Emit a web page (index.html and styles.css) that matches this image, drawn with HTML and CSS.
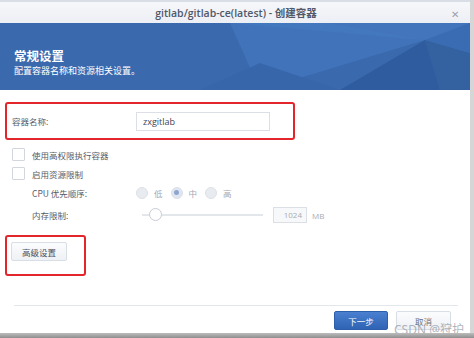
FILE: index.html
```html
<!DOCTYPE html>
<html lang="zh-CN">
<head>
    <meta charset="UTF-8">
    <title>创建容器</title>
    <link rel="stylesheet" href="styles.css">
</head>
<body>
    <div class="page">
        <div class="window">
            <div class="titlebar">
                <span class="title">gitlab/gitlab-ce(latest) - 创建容器</span>
                <span class="close">&#x2715;</span>
            </div>
            <div class="banner">
                <svg class="banner-art" width="470" height="67" viewBox="0 0 470 67">
                    <polygon points="230,0 470,0 470,30 425,17" fill="#4275bb"/>
                    <polygon points="260,67 425,17 330,0 230,0" fill="#4478bf" opacity="0.7"/>
                    <polygon points="340,67 425,17 440,67" fill="#2f5c9f"/>
                    <polygon points="425,17 470,30 470,67 440,67" fill="#34619f"/>
                    <polygon points="425,17 470,0 470,30" fill="#3a6cb3"/>
                    <polygon points="200,67 260,40 340,67" fill="#3866aa"/>
                </svg>
                <div class="banner-title">常规设置</div>
                <div class="banner-sub">配置容器名称和资源相关设置。</div>
            </div>
            <div class="content">
                <div class="mark name-box">
                    <span class="label">容器名称:</span>
                    <div class="text-input">zxgitlab</div>
                </div>
                <div class="check-row first">
                    <span class="checkbox"></span>
                    <span class="check-label">使用高权限执行容器</span>
                </div>
                <div class="check-row">
                    <span class="checkbox"></span>
                    <span class="check-label">启用资源限制</span>
                </div>
                <div class="field-row">
                    <span class="sub-label">CPU 优先顺序:</span>
                    <div class="radios">
                        <span class="radio"></span><span class="radio-text">低</span>
                        <span class="radio checked"></span><span class="radio-text">中</span>
                        <span class="radio"></span><span class="radio-text">高</span>
                    </div>
                </div>
                <div class="field-row mem-row">
                    <span class="sub-label">内存限制:</span>
                    <div class="slider">
                        <span class="slider-track"></span>
                        <span class="slider-thumb"></span>
                    </div>
                    <div class="num-input">1024</div>
                    <span class="unit">MB</span>
                </div>
                <div class="mark adv-box">
                    <button class="btn">高级设置</button>
                </div>
            </div>
            <div class="footer">
                <button class="btn btn-primary">下一步</button>
                <button class="btn btn-cancel">取消</button>
                <span class="watermark">CSDN @狩护</span>
            </div>
        </div>
    </div>
</body>
</html>
```

FILE: styles.css
```css
body, html {
    margin: 0;
    height: 100%;
    font-family: "Noto Sans CJK SC", "Noto Sans", sans-serif;
}

.page {
    width: 474px;
    height: 338px;
    background: linear-gradient(to right, #ffffff 0, #ffffff 470px, #d6d6d6 470px);
    position: relative;
}

.window {
    width: 470px;
    height: 333px;
    background: #ffffff;
    display: flex;
    flex-direction: column;
    position: relative;
}

.page::after {
    content: "";
    position: absolute;
    left: 0;
    right: 0;
    bottom: 0;
    height: 5px;
    background: linear-gradient(#bdbdbd, #8e8e8e);
}

.titlebar {
    height: 23px;
    border-top: 2px solid #d9dde6;
    box-sizing: border-box;
    background: linear-gradient(#f6f7fa, #eceff4);
    display: flex;
    align-items: center;
    justify-content: center;
    position: relative;
}

.title {
    font-family: "Open Sans", "Noto Sans CJK SC", sans-serif;
    font-size: 10.5px;
    font-weight: 600;
    color: #50586a;
    margin-left: 2px;
}

.close {
    position: absolute;
    right: 11px;
    top: 4px;
    font-size: 10px;
    color: #9aa0aa;
}

.banner {
    height: 67px;
    background: #3a69ad;
    position: relative;
    overflow: hidden;
    padding: 25px 0 0 14px;
    box-sizing: border-box;
    color: #ffffff;
}

.banner-art {
    position: absolute;
    left: 0;
    top: 0;
}

.banner-title {
    position: relative;
    font-size: 12.5px;
    font-weight: 700;
    line-height: 16px;
    height: 17px;
}

.banner-sub {
    position: relative;
    font-size: 9px;
    line-height: 12px;
}

.content {
    flex: 1;
    padding: 12px 0 0 5px;
    font-size: 8.5px;
    color: #555c68;
}

.mark {
    border: 2px solid #e2262c;
    border-radius: 3px;
    box-sizing: border-box;
}

.name-box {
    width: 290px;
    height: 38px;
    display: flex;
    align-items: center;
    padding-left: 5px;
}

.label {
    width: 124px;
}

.text-input {
    width: 134px;
    height: 19px;
    border: 1px solid #dcdfe5;
    box-sizing: border-box;
    font-family: "Open Sans", sans-serif;
    font-size: 9px;
    color: #3f4450;
    padding-left: 6px;
    line-height: 17px;
}

.check-row {
    display: flex;
    align-items: center;
    height: 19px;
    padding-left: 7px;
}

.check-row.first {
    margin-top: 5px;
}

.checkbox {
    width: 11px;
    height: 11px;
    border: 1px solid #d2d6dd;
    border-radius: 1px;
    background: #ffffff;
    margin-right: 7px;
}

.field-row {
    display: flex;
    align-items: center;
    height: 19px;
    padding-left: 27px;
}

.sub-label {
    width: 104px;
}

.radios {
    display: flex;
    align-items: center;
    color: #a4a9b2;
}

.radio {
    width: 10px;
    height: 10px;
    border-radius: 50%;
    background: #e8ebef;
    border: 1px solid #dde1e7;
    margin-right: 6px;
    position: relative;
}

.radio.checked {
    background: #dfe6f1;
}

.radio.checked::after {
    content: "";
    position: absolute;
    left: 2.5px;
    top: 2.5px;
    width: 5px;
    height: 5px;
    border-radius: 50%;
    background: #8ea6cc;
}

.radio-text {
    margin-right: 8px;
}

.mem-row {
    height: 24px;
    margin-top: 1px;
}

.slider {
    width: 121px;
    height: 12px;
    position: relative;
    display: flex;
    align-items: center;
    margin-left: 6px;
}

.slider-track {
    width: 100%;
    height: 2px;
    background: #e3e6eb;
}

.slider-thumb {
    position: absolute;
    left: 7px;
    top: -1px;
    width: 11px;
    height: 11px;
    border-radius: 50%;
    background: #ffffff;
    border: 1px solid #c8ccd3;
}

.num-input {
    width: 34px;
    height: 16px;
    margin-left: 10px;
    border: 1px solid #dcdfe5;
    background: #f7f8fa;
    box-sizing: border-box;
    text-align: right;
    padding-right: 4px;
    font-family: "Open Sans", sans-serif;
    font-size: 8px;
    line-height: 14px;
    color: #a8adb5;
}

.unit {
    margin-left: 5px;
    font-family: "Open Sans", sans-serif;
    font-size: 8px;
    color: #a8adb5;
}

.adv-box {
    width: 81px;
    height: 41px;
    margin-top: 8px;
    padding: 5px 0 0 4px;
}

.btn {
    height: 19px;
    padding: 0 10px;
    border: 1px solid #d9dde4;
    border-radius: 2px;
    background: linear-gradient(#fbfcfd, #eef1f5);
    font-family: "Noto Sans CJK SC", sans-serif;
    font-size: 8.5px;
    color: #4b5260;
}

.footer {
    margin: 0 12px 3px 14px;
    border-top: 1px solid #e3e6ea;
    padding-top: 5px;
    height: 19px;
    display: flex;
    justify-content: flex-end;
    gap: 8px;
    position: relative;
}

.btn-primary {
    width: 54px;
    background: linear-gradient(#4a80cf, #2f63b5);
    border-color: #2c5ea9;
    color: #ffffff;
}

.btn-cancel {
    width: 55px;
    margin-right: 7px;
    color: #6a7180;
}

.watermark {
    position: absolute;
    right: -6px;
    bottom: -8px;
    font-family: "Noto Sans", "Noto Sans CJK SC", sans-serif;
    font-size: 12px;
    color: rgba(150, 155, 165, 0.75);
}
```
